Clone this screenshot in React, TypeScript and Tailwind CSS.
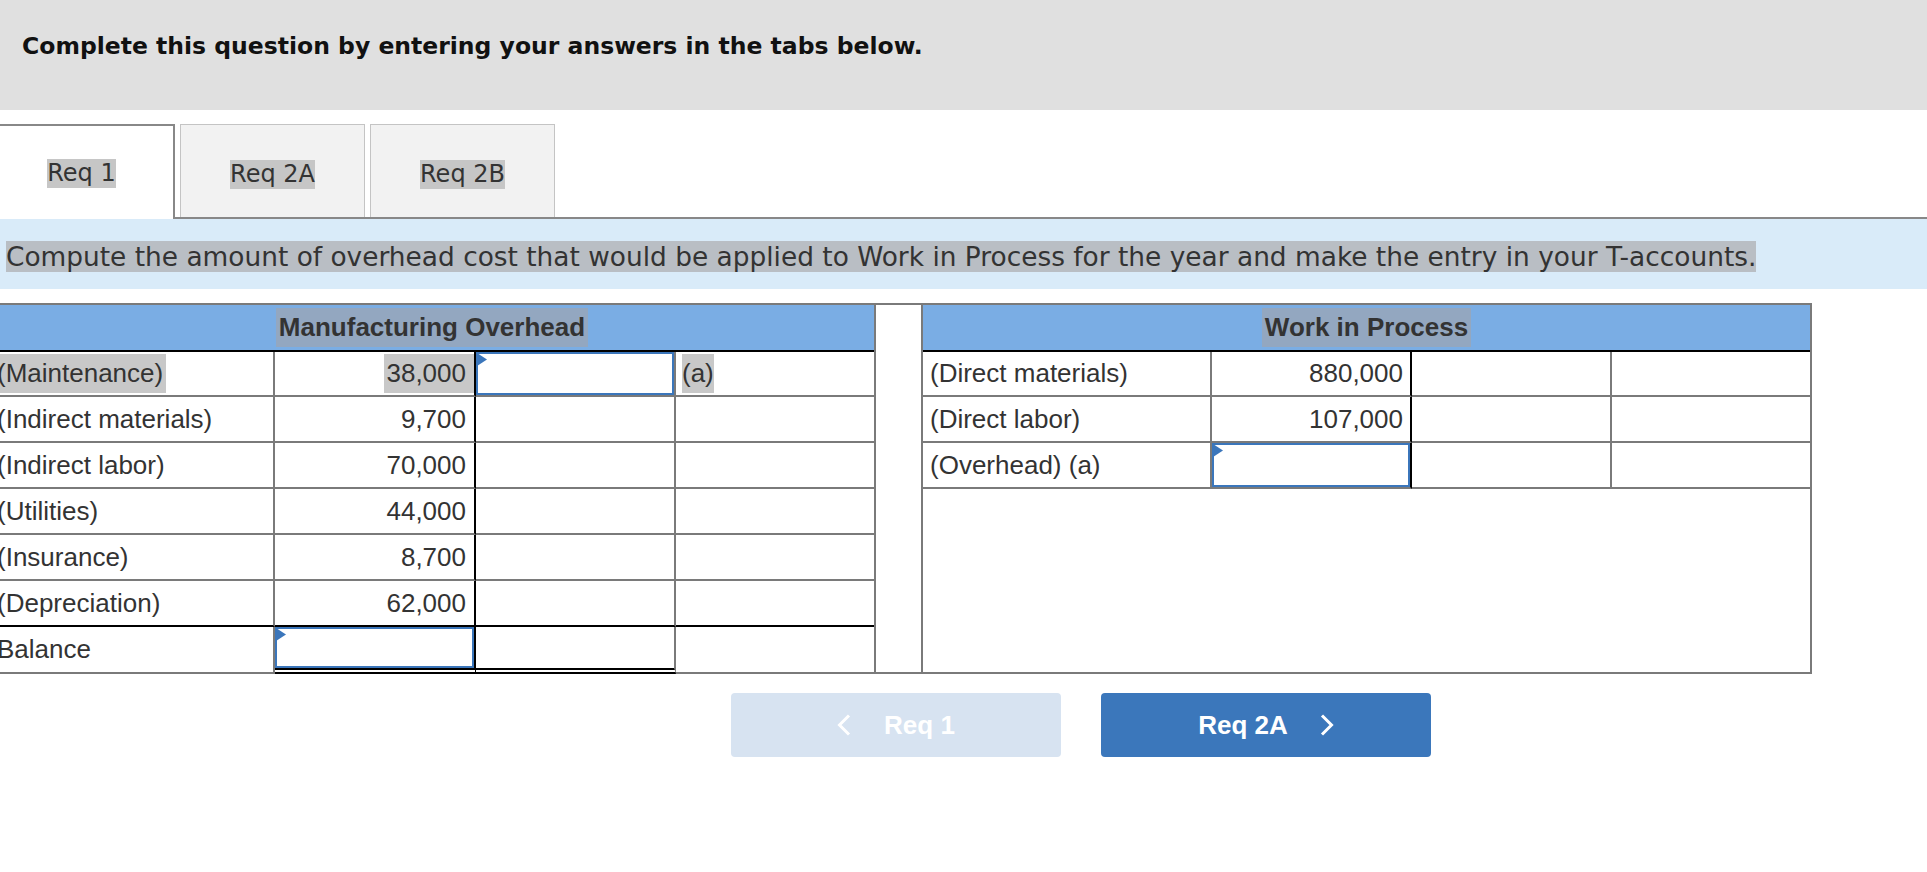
import type { ReactNode } from 'react'

const arial = "font-['Liberation_Sans',Arial,sans-serif]"

function Marker() {
  return (
    <svg className="absolute -left-[1px] -top-[1px]" width="10" height="13" viewBox="0 0 10 13">
      <polygon points="0,0 10,6.5 0,13" fill="#3b76bb" />
    </svg>
  )
}

function InputBox() {
  return (
    <div className="relative h-full w-full border-2 border-[#3b76bb] bg-white">
      <Marker />
    </div>
  )
}

function Chevron({ dir }: { dir: 'left' | 'right' }) {
  return (
    <svg width="14" height="22" viewBox="0 0 14 22" fill="none" stroke="white" strokeWidth="3">
      {dir === 'left'
        ? <polyline points="12,1.5 2.5,11 12,20.5" />
        : <polyline points="2,1.5 11.5,11 2,20.5" />}
    </svg>
  )
}

interface LeftRowProps {
  h: string
  label: ReactNode
  amount?: ReactNode
  third?: ReactNode
  fourth?: ReactNode
  blackBottom?: boolean
}

function LeftRow({ h, label, amount, third, fourth, blackBottom }: LeftRowProps) {
  const b = blackBottom ? 'border-b-black' : 'border-b-[#7a7a7a]'
  return (
    <div className={`flex ${h}`}>
      <div className={`flex w-[285px] shrink-0 items-center overflow-hidden whitespace-nowrap border-r-2 border-b-2 border-r-[#7a7a7a] pl-[7px] ${b}`}>
        {label}
      </div>
      <div className={`flex w-[201px] shrink-0 items-center justify-end whitespace-nowrap border-r-2 border-b-2 border-r-black pr-[8px] ${b}`}>
        {amount}
      </div>
      <div className={`flex w-[200px] shrink-0 items-center border-r-2 border-b-2 border-r-[#7a7a7a] ${b}`}>
        {third}
      </div>
      <div className={`flex w-[198px] shrink-0 items-center whitespace-nowrap border-b-2 pl-[6px] ${b}`}>
        {fourth}
      </div>
    </div>
  )
}

function RightRow({ h, label, amount }: { h: string; label: ReactNode; amount?: ReactNode }) {
  return (
    <div className={`flex ${h}`}>
      <div className="flex w-[289px] shrink-0 items-center whitespace-nowrap border-r-2 border-b-2 border-[#7a7a7a] pl-[7px]">
        {label}
      </div>
      <div className="flex w-[200px] shrink-0 items-center justify-end whitespace-nowrap border-r-2 border-b-2 border-r-black border-b-[#7a7a7a] pr-[7px]">
        {amount}
      </div>
      <div className="w-[200px] shrink-0 border-r-2 border-b-2 border-[#7a7a7a]" />
      <div className="w-[198px] shrink-0 border-b-2 border-[#7a7a7a]" />
    </div>
  )
}

const tabs = ['Req 1', 'Req 2A', 'Req 2B']

export default function App() {
  return (
    <div className="h-[872px] w-[1927px] overflow-hidden bg-white">
      <header className="h-[110px] bg-[#e0e0e0] pl-[22px] pt-[32px]">
        <h1 className="font-['DejaVu_Sans',Verdana,sans-serif] text-[23.5px] font-bold leading-[28px] text-[#111]">
          Complete this question by entering your answers in the tabs below.
        </h1>
      </header>

      <div className="-ml-[10px] w-[1937px]">
        <nav className="mt-[14px] flex h-[95px] items-start gap-[5px] border-b-2 border-[#888]">
          {tabs.map((t, i) => (
            <div
              key={t}
              className={
                i === 0
                  ? 'relative z-10 flex h-[95px] w-[185px] items-center justify-center border-t-2 border-r-2 border-[#888] bg-white pt-[2px]'
                  : 'flex h-[93px] w-[185px] items-center justify-center border border-b-0 border-[#c4c4c4] bg-[#f2f2f2] pt-[6px]'
              }
            >
              <span className="bg-[#c6c6c6] font-['DejaVu_Sans',Verdana,sans-serif] text-[24px] leading-[29px] text-[#333]">
                {t}
              </span>
            </div>
          ))}
        </nav>

        <div className="flex h-[70px] items-center bg-[#d9ebf9] pl-[16px] pt-[4px]">
          <span className="bg-[#b9bec4] font-['DejaVu_Sans',Verdana,sans-serif] text-[26.4px] leading-[31px] text-[#333]">
            Compute the amount of overhead cost that would be applied to Work in Process for the year and make the entry in your T-accounts.
          </span>
        </div>

        <section className={`mt-[14px] flex w-[1822px] border-t-2 border-[#7a7a7a] text-[26px] text-[#333] ${arial}`}>
          {/* Manufacturing Overhead */}
          <div className="flex w-[886px] shrink-0 flex-col border-r-2 border-[#7a7a7a]">
            <div className="flex h-[47px] items-center justify-center border-b-2 border-black bg-[#7aade4]">
              <span className="bg-[#93a7c0] px-[3px] font-bold">Manufacturing Overhead</span>
            </div>
            <LeftRow
              h="h-[45px]"
              label={<span className="bg-[#c8c8c8] pr-[3px]">(Maintenance)</span>}
              amount={<span className="-mr-[8px] bg-[#c8c8c8] pl-[2px] pr-[8px]">38,000</span>}
              third={<InputBox />}
              fourth={<span className="bg-[#c8c8c8]">(a)</span>}
            />
            <LeftRow h="h-[46px]" label="(Indirect materials)" amount="9,700" />
            <LeftRow h="h-[46px]" label="(Indirect labor)" amount="70,000" />
            <LeftRow h="h-[46px]" label="(Utilities)" amount="44,000" />
            <LeftRow h="h-[46px]" label="(Insurance)" amount="8,700" />
            <LeftRow h="h-[46px]" label="(Depreciation)" amount="62,000" blackBottom />
            <div className="flex h-[47px]">
              <div className="flex w-[285px] shrink-0 items-center whitespace-nowrap border-r-2 border-b-2 border-[#7a7a7a] pl-[7px]">
                Balance
              </div>
              <div className="w-[201px] shrink-0 border-r-2 border-b-[6px] border-double border-black">
                <InputBox />
              </div>
              <div className="w-[200px] shrink-0 border-r-2 border-b-[6px] border-double border-r-[#7a7a7a] border-b-black" />
              <div className="w-[198px] shrink-0 border-b-2 border-[#7a7a7a]" />
            </div>
          </div>

          {/* spacer */}
          <div className="w-[47px] shrink-0 border-r-2 border-b-2 border-[#7a7a7a] bg-white" />

          {/* Work in Process */}
          <div className="flex w-[889px] shrink-0 flex-col border-r-2 border-b-2 border-[#7a7a7a]">
            <div className="flex h-[47px] items-center justify-center border-b-2 border-black bg-[#7aade4]">
              <span className="bg-[#93a7c0] px-[3px] font-bold">Work in Process</span>
            </div>
            <RightRow h="h-[45px]" label="(Direct materials)" amount="880,000" />
            <RightRow h="h-[46px]" label="(Direct labor)" amount="107,000" />
            <div className="flex h-[46px]">
              <div className="flex w-[289px] shrink-0 items-center whitespace-nowrap border-r-2 border-b-2 border-[#7a7a7a] pl-[7px]">
                (Overhead) (a)
              </div>
              <div className="w-[200px] shrink-0 border-r-2 border-b-2 border-r-black border-b-[#7a7a7a]">
                <InputBox />
              </div>
              <div className="w-[200px] shrink-0 border-r-2 border-b-2 border-[#7a7a7a]" />
              <div className="w-[198px] shrink-0 border-b-2 border-[#7a7a7a]" />
            </div>
            <div className="flex-1" />
          </div>
        </section>
      </div>

      <div className={`ml-[731px] mt-[19px] flex gap-[40px] text-[26px] font-bold text-white ${arial}`}>
        <button className="flex h-[64px] w-[330px] items-center justify-center gap-[33px] rounded-[4px] bg-[#d7e3f1]">
          <Chevron dir="left" />
          <span>Req 1</span>
        </button>
        <button className="flex h-[64px] w-[330px] items-center justify-center gap-[32px] rounded-[4px] bg-[#3b77bb]">
          <span>Req 2A</span>
          <Chevron dir="right" />
        </button>
      </div>
    </div>
  )
}
